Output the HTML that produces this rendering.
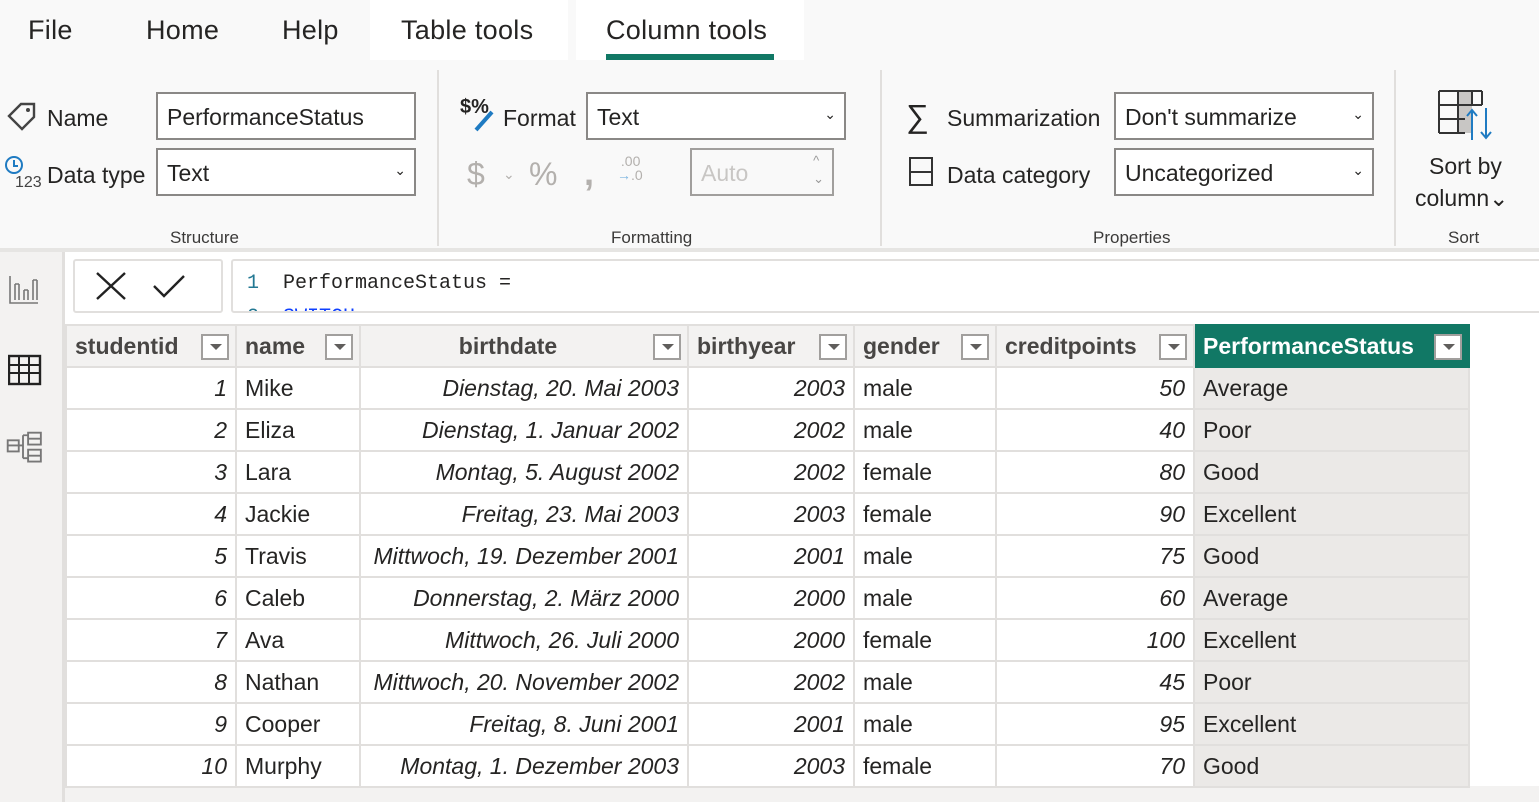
<!DOCTYPE html>
<html><head><meta charset="utf-8"><style>
*{box-sizing:border-box;margin:0;padding:0}
body{width:1539px;height:802px;overflow:hidden;background:#fff;font-family:"Liberation Sans",sans-serif;color:#252423;position:relative}
.abs{position:absolute}
.tabs{left:0;top:0;width:1539px;height:60px;background:#f9f9f9}
.tab{position:absolute;top:15px;font-size:27px;color:#252423;letter-spacing:0.3px}
.ribbon{left:0;top:60px;width:1539px;height:190px;background:#f9f9f9}
.lbl{position:absolute;font-size:23px;color:#252423}
.box{position:absolute;border:2px solid #8a8886;background:#fff;font-size:23px;padding:10px 0 0 9px;height:48px}
.chev{position:absolute;right:8px;top:12px;font-size:14px}
.grp{position:absolute;font-size:17px;color:#3b3a39;top:228px}
.vsep{position:absolute;width:2px;background:#e1dfdd;top:70px;height:176px}
table{border-collapse:collapse;position:absolute;left:65px;top:324px;font-size:23px}
td,th{height:42px;border:2px solid #e1dfdd;padding:0 8px;white-space:nowrap}
th{background:#f3f2f1;color:#484644;font-weight:bold;text-align:left;position:relative;font-size:23px}
th .dd{position:absolute;right:6px;top:8px;width:28px;height:26px;border:2px solid #a19f9d;background:#fff}
th .dd:after{content:"";position:absolute;left:7px;top:8px;border-left:6px solid transparent;border-right:6px solid transparent;border-top:6px solid #605e5c}
td.r{text-align:right;font-style:italic}
td.ps{background:#ebe9e7}
th.ps{background:#117865;color:#fff;border-color:#117865}
</style></head><body>
<div class="abs tabs"></div>
<div class="abs" style="left:370px;top:0;width:198px;height:60px;background:#fff"></div>
<div class="abs" style="left:576px;top:0;width:228px;height:60px;background:#fff"></div>
<div class="tab" style="left:28px">File</div>
<div class="tab" style="left:146px">Home</div>
<div class="tab" style="left:282px">Help</div>
<div class="tab" style="left:401px">Table tools</div>
<div class="tab" style="left:606px">Column tools</div>
<div class="abs" style="left:606px;top:54px;width:168px;height:6px;background:#117865"></div>
<div class="abs ribbon"></div>
<svg class="abs" style="left:6px;top:101px" width="32" height="32" viewBox="0 0 32 32"><path d="M3 15 L15 3 L28 3 L28 16 L16 28 Z" fill="none" stroke="#444" stroke-width="2.4"/><circle cx="22" cy="9" r="2" fill="#444"/></svg>
<div class="lbl" style="left:47px;top:105px">Name</div>
<div class="box" style="left:156px;top:92px;width:260px">PerformanceStatus</div>
<svg class="abs" style="left:4px;top:154px" width="38" height="34"><circle cx="10" cy="11" r="8" fill="none" stroke="#1f7bc2" stroke-width="2"/><path d="M10 6v6h4" stroke="#1f7bc2" stroke-width="2" fill="none"/><text x="11" y="33" font-size="16" fill="#444" font-family="Liberation Sans">123</text></svg>
<div class="lbl" style="left:47px;top:162px">Data type</div>
<div class="box" style="left:156px;top:148px;width:260px">Text<span class="chev">⌄</span></div>
<div class="grp" style="left:170px">Structure</div>
<div class="vsep" style="left:437px"></div>
<div class="lbl" style="left:460px;top:96px;font-weight:bold;font-size:20px">$%</div>
<svg class="abs" style="left:472px;top:108px" width="24" height="24"><path d="M4 22 L20 4" stroke="#1f7bc2" stroke-width="4"/></svg>
<div class="lbl" style="left:503px;top:105px">Format</div>
<div class="box" style="left:586px;top:92px;width:260px">Text<span class="chev">⌄</span></div>
<div class="lbl" style="left:467px;top:156px;color:#b3b0ad;font-size:32px">$</div>
<div class="lbl" style="left:503px;top:166px;color:#b3b0ad;font-size:14px">⌄</div>
<div class="lbl" style="left:529px;top:156px;color:#b3b0ad;font-size:32px">%</div>
<div class="lbl" style="left:584px;top:152px;color:#b3b0ad;font-size:36px;font-weight:bold">,</div>
<div class="lbl" style="left:617px;top:154px;color:#b3b0ad;font-size:14px;line-height:14px">&nbsp;.00<br><span style="color:#7fb6e0">→</span>.0</div>
<div class="box" style="left:690px;top:148px;width:144px;border-color:#a19f9d;color:#c8c6c4;background:#f9f9f9">Auto<span class="chev" style="top:2px;color:#999;font-size:13px;line-height:18px">^<br>⌄</span></div>
<div class="grp" style="left:611px">Formatting</div>
<div class="vsep" style="left:880px"></div>
<div class="lbl" style="left:906px;top:98px;font-size:32px">∑</div>
<div class="lbl" style="left:947px;top:105px">Summarization</div>
<div class="box" style="left:1114px;top:92px;width:260px">Don't summarize<span class="chev">⌄</span></div>
<div class="abs" style="left:909px;top:157px;width:24px;height:29px;border:2px solid #333"><div style="border-top:2px solid #333;margin-top:12px"></div></div>
<div class="lbl" style="left:947px;top:162px">Data category</div>
<div class="box" style="left:1114px;top:148px;width:260px">Uncategorized<span class="chev">⌄</span></div>
<div class="grp" style="left:1093px">Properties</div>
<div class="vsep" style="left:1394px"></div>
<svg class="abs" style="left:1436px;top:88px" width="64" height="60"><rect x="22" y="3" width="14" height="42" fill="#c8c6c4"/><path d="M3 3h43M3 17h43M3 31h26M3 45h26M3 3v42M22 3v42M36 3v14M46 3v14" stroke="#333" stroke-width="2" fill="none"/><path d="M36 52V22M31 28l5-6 5 6M50 20v30M45 44l5 6 5-6" stroke="#1f7bc2" stroke-width="2" fill="none"/></svg>
<div class="lbl" style="left:1429px;top:153px">Sort by</div>
<div class="lbl" style="left:1415px;top:185px">column⌄</div>
<div class="grp" style="left:1448px">Sort</div>
<div class="abs" style="left:0;top:248px;width:1539px;height:4px;background:#e6e5e3"></div>
<div class="abs" style="left:0;top:252px;width:62px;height:550px;background:#f3f2f1"></div>
<div class="abs" style="left:62px;top:252px;width:3px;height:550px;background:#e1dfdd"></div>
<svg class="abs" style="left:8px;top:274px" width="32" height="32"><path d="M2 2v27h28M7 26V10M11 26V10M16 26V16M20 26V16M25 26V6M29 26V6M7 10h4M16 16h4M25 6h4" stroke="#777" stroke-width="1.6" fill="none"/></svg>
<svg class="abs" style="left:8px;top:354px" width="34" height="32"><rect x="1" y="2" width="31" height="28" fill="none" stroke="#222" stroke-width="2.4"/><path d="M1 11h31M1 19h31M11 2v28M21 2v28" stroke="#222" stroke-width="2"/></svg>
<svg class="abs" style="left:6px;top:431px" width="38" height="38"><path d="M2 11h13v13H2zM2 17h13M26 2h15v14H26zM26 9h15M26 22h15v14H26zM26 29h15M15 17h5M20 5v27M20 5h6M20 32h6" stroke="#777" stroke-width="2.2" fill="none" transform="scale(0.85)"/></svg>
<div class="abs" style="left:65px;top:252px;width:1474px;height:72px;background:#fff"></div>
<div class="abs" style="left:73px;top:259px;width:150px;height:54px;border:2px solid #e1dfdd;border-radius:3px;background:#fff"></div>
<svg class="abs" style="left:94px;top:270px" width="100" height="32"><path d="M3 3l28 26M31 3L3 29" stroke="#222" stroke-width="2.4"/><path d="M60 16l10 10 20-20" stroke="#222" stroke-width="2.4" fill="none"/></svg>
<div class="abs" style="left:231px;top:259px;width:1320px;height:54px;border:2px solid #e1dfdd;border-radius:3px;background:#fff;overflow:hidden;font-family:'Liberation Mono',monospace;font-size:20px;line-height:34px;padding:6px 0 0 14px"><span style="color:#237893">1</span>&nbsp; PerformanceStatus =<br><span style="color:#237893">2</span>&nbsp; <span style="color:#0f40ff">SWITCH</span></div>
<div class="abs" style="left:65px;top:786px;width:1474px;height:16px;background:#f3f2f1"></div>
<table>
<tr><th style="width:170px">studentid<span class="dd"></span></th><th style="width:124px">name<span class="dd"></span></th><th style="width:328px;text-align:center;padding-right:40px">birthdate<span class="dd"></span></th><th style="width:166px">birthyear<span class="dd"></span></th><th style="width:142px">gender<span class="dd"></span></th><th style="width:198px">creditpoints<span class="dd"></span></th><th class="ps" style="width:275px">PerformanceStatus<span class="dd"></span></th></tr>
<tr><td class="r">1</td><td>Mike</td><td class="r">Dienstag, 20. Mai 2003</td><td class="r">2003</td><td>male</td><td class="r">50</td><td class="ps">Average</td></tr>
<tr><td class="r">2</td><td>Eliza</td><td class="r">Dienstag, 1. Januar 2002</td><td class="r">2002</td><td>male</td><td class="r">40</td><td class="ps">Poor</td></tr>
<tr><td class="r">3</td><td>Lara</td><td class="r">Montag, 5. August 2002</td><td class="r">2002</td><td>female</td><td class="r">80</td><td class="ps">Good</td></tr>
<tr><td class="r">4</td><td>Jackie</td><td class="r">Freitag, 23. Mai 2003</td><td class="r">2003</td><td>female</td><td class="r">90</td><td class="ps">Excellent</td></tr>
<tr><td class="r">5</td><td>Travis</td><td class="r">Mittwoch, 19. Dezember 2001</td><td class="r">2001</td><td>male</td><td class="r">75</td><td class="ps">Good</td></tr>
<tr><td class="r">6</td><td>Caleb</td><td class="r">Donnerstag, 2. März 2000</td><td class="r">2000</td><td>male</td><td class="r">60</td><td class="ps">Average</td></tr>
<tr><td class="r">7</td><td>Ava</td><td class="r">Mittwoch, 26. Juli 2000</td><td class="r">2000</td><td>female</td><td class="r">100</td><td class="ps">Excellent</td></tr>
<tr><td class="r">8</td><td>Nathan</td><td class="r">Mittwoch, 20. November 2002</td><td class="r">2002</td><td>male</td><td class="r">45</td><td class="ps">Poor</td></tr>
<tr><td class="r">9</td><td>Cooper</td><td class="r">Freitag, 8. Juni 2001</td><td class="r">2001</td><td>male</td><td class="r">95</td><td class="ps">Excellent</td></tr>
<tr><td class="r">10</td><td>Murphy</td><td class="r">Montag, 1. Dezember 2003</td><td class="r">2003</td><td>female</td><td class="r">70</td><td class="ps">Good</td></tr>
</table>
</body></html>
